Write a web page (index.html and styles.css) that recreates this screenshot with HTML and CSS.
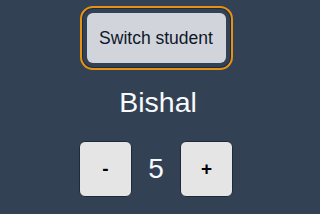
FILE: index.html
```html
<!DOCTYPE html>
<html lang="en">

<head>
  <meta charset="UTF-8">
  <meta name="viewport" content="width=device-width, initial-scale=1.0">
  <title>Counter</title>
  <link rel="stylesheet" href="styles.css">
</head>

<body>
  <div class="app">
    <button class="switch-btn">Switch student</button>
    <h1 class="student-name">Bishal</h1>
    <div class="counter">
      <button class="counter-btn">-</button>
      <span class="count">5</span>
      <button class="counter-btn">+</button>
    </div>
  </div>
</body>

</html>
```

FILE: styles.css
```css
html,
body {
  margin: 0;
  padding: 0;
  height: 100%;
  overflow: hidden;
  background: #334155;
  font-family: "Liberation Sans", Arial, sans-serif;
}

.app {
  display: flex;
  flex-direction: column;
  align-items: center;
  gap: 23px;
  padding: 13px 8px 0 0;
}

.switch-btn {
  width: 139px;
  height: 50px;
  padding: 0;
  border: none;
  border-radius: 6px;
  background: #d1d5db;
  color: #0f172a;
  font-family: inherit;
  font-size: 17.5px;
  cursor: pointer;
  outline: 2px solid #e8910f;
  outline-offset: 5px;
  box-shadow: 0 0 0 4px #334155, 0 0 0 5px #1c2b45;
}

.student-name {
  margin: 0;
  color: #f8fafc;
  font-size: 28.5px;
  font-weight: normal;
  line-height: 32px;
  padding-left: 4px;
}

.counter {
  display: flex;
  align-items: center;
  gap: 15px;
}

.counter-btn {
  width: 53px;
  height: 56px;
  padding: 0;
  border: 1px solid #1f2937;
  border-radius: 6px;
  background: #e5e5e5;
  color: #000;
  font-family: inherit;
  font-size: 19px;
  font-weight: bold;
  cursor: pointer;
}

.count {
  color: #f8fafc;
  font-size: 28px;
  width: 18px;
  text-align: center;
}
```
